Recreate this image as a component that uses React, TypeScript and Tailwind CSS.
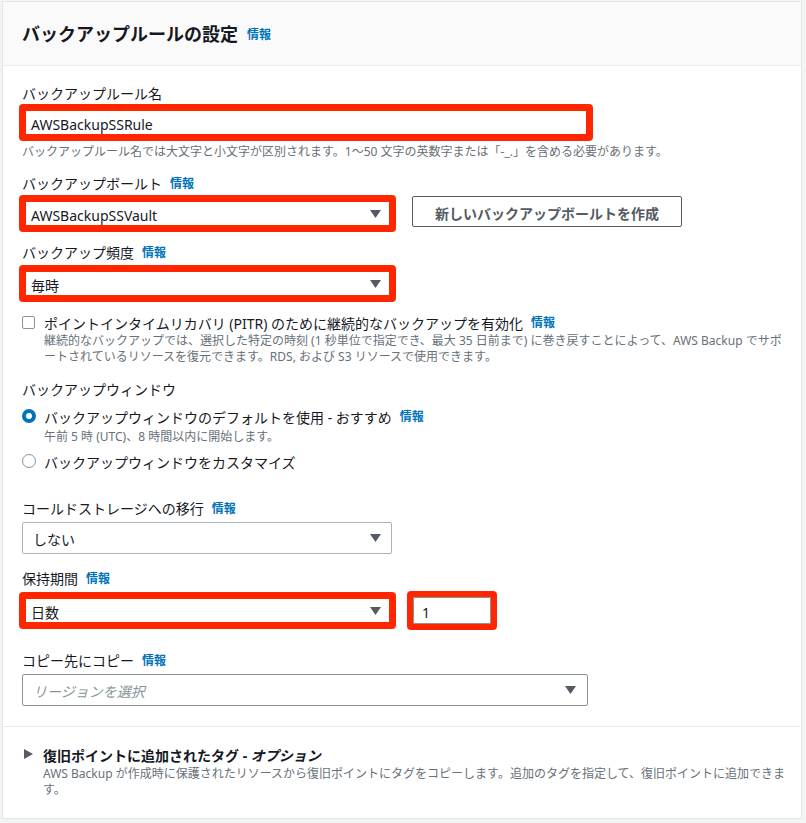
import React from "react";

const Info = ({ className = "" }: { className?: string }) => (
  <span className={`text-[#0073bb] font-bold text-[12px] ml-[8px] ${className}`}>情報</span>
);

const Label = ({ children, info = false, className = "" }: { children: React.ReactNode; info?: boolean; className?: string }) => (
  <div className={`h-[20px] flex items-center pt-[4px] text-[14px] leading-[20px] text-[#16191f] ${className}`}>
    <span>{children}</span>
    {info && <Info />}
  </div>
);

const Caret = () => (
  <svg width="11" height="8" viewBox="0 0 11 8" className="shrink-0">
    <path d="M0 0 L11 0 L5.5 8 Z" fill="#545b64" />
  </svg>
);

const RedSelect = ({ text, className = "" }: { text: string; className?: string }) => (
  <div className={`h-[37px] w-[377px] border-[7px] border-[#ff2600] rounded-[4px] bg-white flex items-center pl-[5px] pr-[8px] -ml-[3px] ${className}`}>
    <span className="flex-1 pt-[4px] text-[14px] leading-[20px] text-[#16191f]">{text}</span>
    <Caret />
  </div>
);

export default function App() {
  return (
    <div className="min-h-[823px] w-[806px] bg-[#f2f3f3] pt-[1px] pl-[2px] font-['Noto_Sans','Noto_Sans_CJK_JP',sans-serif]">
      <div className="w-[800px] h-[818px] bg-white border border-[#e3e6e6] flex flex-col">
        {/* Header */}
        <div className="h-[64px] bg-[#fafafa] border-b border-[#eaeded] flex items-center pl-[19px] shrink-0">
          <span className="text-[18px] font-bold text-[#16191f] leading-[24px]">バックアップルールの設定</span>
          <Info className="ml-[9px] mt-[2px]" />
        </div>

        {/* Body */}
        <div className="pl-[19px] pt-[16px] flex flex-col">
          <Label>バックアップルール名</Label>
          <div className="mt-[2px] h-[37px] w-[574px] border-[7px] border-[#ff2600] rounded-[4px] bg-white flex items-center pl-[5px] -ml-[3px]">
            <span className="pt-[4px] text-[14px] leading-[20px] text-[#16191f]">AWSBackupSSRule</span>
          </div>
          <div className="mt-[1px] h-[16px] pt-[2px] text-[12px] leading-[16px] text-[#687078] whitespace-nowrap">
            バックアップルール名では大文字と小文字が区別されます。1〜50 文字の英数字または「-_.」を含める必要があります。
          </div>

          <Label info className="mt-[14px]">バックアップボールト</Label>
          <div className="mt-[3px] flex items-start">
            <RedSelect text="AWSBackupSSVault" />
            <div className="ml-[16px] mt-[1px] h-[31px] w-[270px] border border-[#545b64] rounded-[2px] flex items-center justify-center pt-[3px] text-[14px] font-bold text-[#545b64]">
              新しいバックアップボールトを作成
            </div>
          </div>

          <Label info className="mt-[9px]">バックアップ頻度</Label>
          <RedSelect text="毎時" className="mt-[4px]" />

          <div className="mt-[9px] flex items-start">
            <div className="mt-[5px] w-[13px] h-[13px] border border-[#879596] rounded-[2px] bg-white shrink-0" />
            <div className="ml-[9px] flex flex-col">
              <div className="h-[20px] flex items-center pt-[4px] text-[14px] text-[#16191f]">
                <span>ポイントインタイムリカバリ (PITR) のために継続的なバックアップを有効化</span>
                <Info />
              </div>
              <div className="pt-[2px] text-[12px] leading-[16px] text-[#687078] whitespace-nowrap">
                継続的なバックアップでは、選択した特定の時刻 (1 秒単位で指定でき、最大 35 日前まで) に巻き戻すことによって、AWS Backup でサポ
                <br />
                ートされているリソースを復元できます。RDS, および S3 リソースで使用できます。
              </div>
            </div>
          </div>

          <Label className="mt-[13px]">バックアップウィンドウ</Label>
          <div className="mt-[7px] flex items-start">
            <div className="mt-[4px] w-[14px] h-[14px] rounded-full border-[4px] border-[#0073bb] bg-white shrink-0" />
            <div className="ml-[8px] flex flex-col">
              <div className="h-[20px] flex items-center pt-[4px] text-[14px] text-[#16191f]">
                <span>バックアップウィンドウのデフォルトを使用 - おすすめ</span>
                <Info />
              </div>
              <div className="h-[18px] pt-[3px] text-[12px] leading-[18px] text-[#687078]">午前 5 時 (UTC)、8 時間以内に開始します。</div>
            </div>
          </div>
          <div className="mt-[7px] flex items-start">
            <div className="mt-[4px] w-[14px] h-[14px] rounded-full border border-[#879596] bg-white shrink-0" />
            <div className="ml-[8px] h-[20px] flex items-center pt-[4px] text-[14px] text-[#16191f]">バックアップウィンドウをカスタマイズ</div>
          </div>

          <Label info className="mt-[27px]">コールドストレージへの移行</Label>
          <div className="mt-[5px] h-[32px] w-[370px] border border-[#aab7b8] rounded-[2px] flex items-center pl-[10px] pr-[10px]">
            <span className="flex-1 pt-[4px] text-[14px] leading-[20px] text-[#16191f]">しない</span>
            <Caret />
          </div>

          <Label info className="mt-[13px]">保持期間</Label>
          <div className="mt-[4px] flex items-start">
            <div className="mt-[1px]">
              <RedSelect text="日数" />
            </div>
            <div className="ml-[11px] h-[39px] w-[90px] border-[6px] border-[#ff2600] rounded-[4px] bg-white p-0">
              <div className="h-full w-full border border-[#879596] flex items-center pl-[8px] pt-[4px] text-[14px] leading-[20px] text-[#16191f]">1</div>
            </div>
          </div>

          <Label info className="mt-[19px]">コピー先にコピー</Label>
          <div className="mt-[5px] h-[32px] w-[566px] border border-[#879596] rounded-[2px] flex items-center pl-[10px] pr-[11px]">
            <span className="flex-1 pt-[4px] text-[14px] leading-[20px] italic text-[#879596]">リージョンを選択</span>
            <Caret />
          </div>
        </div>

        {/* Divider + expandable */}
        <div className="mt-[20px] border-t border-[#eaeded] pl-[21px] pt-[17px] flex flex-col">
          <div className="h-[20px] flex items-center text-[14px] font-bold text-[#16191f]">
            <svg width="9" height="10" viewBox="0 0 9 10" className="shrink-0">
              <path d="M0 0 L9 5 L0 10 Z" fill="#545b64" />
            </svg>
            <span className="ml-[10px] pt-[4px] leading-[20px]">
              復旧ポイントに追加されたタグ - <span className="italic">オプション</span>
            </span>
          </div>
          <div className="pl-[19px] pt-[2px] text-[12px] leading-[16px] text-[#687078] whitespace-nowrap">
            AWS Backup が作成時に保護されたリソースから復旧ポイントにタグをコピーします。追加のタグを指定して、復旧ポイントに追加できま
            <br />
            す。
          </div>
        </div>
      </div>
    </div>
  );
}
